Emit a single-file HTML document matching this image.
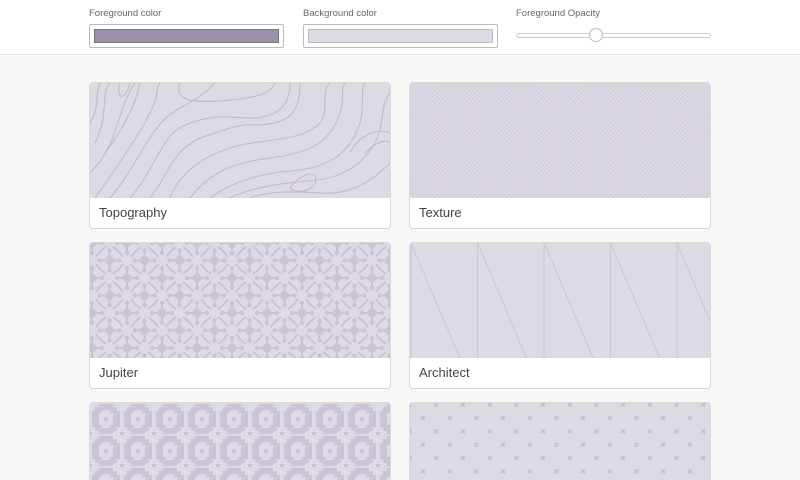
<!DOCTYPE html>
<html><head><style>
*{box-sizing:border-box;margin:0;padding:0}
html,body{width:800px;height:480px;overflow:hidden}
body{background:#f8f8f8;font-family:"Liberation Sans",sans-serif;position:relative}
.hdr{position:absolute;left:0;top:0;width:800px;height:55px;background:#fff;border-bottom:1px solid #e4e4e4}
.lbl{position:absolute;top:8px;font-size:9.5px;color:#666}
.sw{position:absolute;top:24px;width:195px;height:24px;border:1px solid #bbb;border-radius:2px;padding:4px}
.sw div{width:100%;height:100%;border:1px solid #999}
.track{position:absolute;left:516px;top:33px;width:195px;height:5px;border:1px solid #ccc;border-radius:3px;background:#fff}
.thumb{position:absolute;left:589px;top:28px;width:14px;height:14px;border:1px solid #bbb;border-radius:50%;background:#fff}
.card{position:absolute;width:302px;height:147px;background:#fff;border:1px solid #d8d8d8;border-radius:4px;overflow:hidden}
.img{position:absolute;left:0;top:0;width:300px;height:115px;background:#dddae3;overflow:hidden}
.t{position:absolute;left:9px;top:122px;font-size:13px;color:#444}
</style></head><body>
<div class="hdr">
<div class="lbl" style="left:89px">Foreground color</div>
<div class="lbl" style="left:303px">Background color</div>
<div class="lbl" style="left:516px">Foreground Opacity</div>
<div class="sw" style="left:89px"><div style="background:#9b91a9;border-color:#777"></div></div>
<div class="sw" style="left:303px"><div style="background:#dddae3;border-color:#bbb"></div></div>
<div class="track"></div><div class="thumb"></div>
</div>

<div class="card" style="left:89px;top:82px"><div class="img">
<svg width="300" height="115" fill="none" stroke="#bfb8c8" stroke-width="1">
<path d="M5 60 C20 30 10 10 20 0"/>
<path d="M0 90 C30 60 25 30 45 0"/>
<path d="M5 115 C30 80 50 50 60 30 C70 10 65 5 70 0"/>
<path d="M20 115 C50 80 60 40 90 25 C110 15 120 5 125 0"/>
<path d="M40 115 C70 80 70 50 100 40 C130 30 140 35 160 35 C190 35 200 20 200 0"/>
<path d="M60 115 C80 90 80 70 110 55 C140 45 150 40 170 42 C200 40 210 30 210 0"/>
<path d="M80 115 C90 90 110 75 140 65 C170 55 210 60 230 40 C240 25 230 10 240 0"/>
<path d="M100 115 C120 90 140 80 180 75 C220 70 240 60 250 30 C255 15 250 5 255 0"/>
<path d="M120 115 C140 100 170 90 200 88 C240 85 260 70 270 40 C275 20 270 5 275 0"/>
<path d="M140 115 C160 105 190 100 220 98 C250 95 270 85 285 60 C295 40 290 20 300 10"/>
<path d="M160 115 C180 108 200 108 230 110 C260 112 280 100 300 80"/>
<path d="M200 105 C210 90 230 85 225 100 C220 110 205 110 200 105"/>
<path d="M260 70 C270 50 290 45 300 50"/>
<path d="M275 70 C285 60 295 55 300 60"/>
<path d="M30 0 C25 15 35 20 40 0"/>
<path d="M90 0 C85 15 95 20 130 18 C170 15 180 10 185 0"/>
<path d="M0 40 C10 25 5 10 10 0"/>
<path d="M50 0 C45 25 30 50 15 70"/>
</svg></div><div class="t">Topography</div></div>

<div class="card" style="left:409px;top:82px"><div class="img" style="background-color:#dddae3;background-image:repeating-linear-gradient(45deg,rgba(200,193,210,.35) 0 1px,transparent 1px 3px),repeating-linear-gradient(-45deg,rgba(200,193,210,.35) 0 1px,transparent 1px 3px)"></div><div class="t">Texture</div></div>

<div class="card" style="left:89px;top:242px"><div class="img">
<svg width="300" height="115">
<defs>
<g id="cr" fill="#cac3d5" stroke="#cac3d5">
<circle r="4.5" stroke="none"/>
<line x1="0" y1="-9" x2="0" y2="9" stroke-width="2"/>
<line x1="-9" y1="0" x2="9" y2="0" stroke-width="2"/>
<circle cy="-10" r="2.2" stroke="none"/><circle cy="10" r="2.2" stroke="none"/>
<circle cx="-10" r="2.2" stroke="none"/><circle cx="10" r="2.2" stroke="none"/>
</g>
<pattern id="j" width="35" height="35" patternUnits="userSpaceOnUse" x="2" y="0">
<use href="#cr" x="17.5" y="17.5"/>
<use href="#cr" x="0" y="0"/><use href="#cr" x="35" y="0"/><use href="#cr" x="0" y="35"/><use href="#cr" x="35" y="35"/>
<g fill="none" stroke="#cac3d5" stroke-width="2">
<path d="M4 14 Q8 8 14 4 M21 4 Q27 8 31 14 M4 21 Q8 27 14 31 M21 31 Q27 27 31 21"/>
</g></pattern></defs>
<rect width="300" height="115" fill="url(#j)"/></svg></div><div class="t">Jupiter</div></div>

<div class="card" style="left:409px;top:242px"><div class="img">
<svg width="300" height="115" stroke="#cbc5d3" stroke-width="1" fill="none">
<path d="M1 0V115M67.5 0V115M134 0V115M200.5 0V115M267 0V115"/>
<path d="M1 0L50 115M67.5 0L116.5 115M134 0L183 115M200.5 0L249.5 115M267 0L316 115"/>
</svg></div><div class="t">Architect</div></div>

<div class="card" style="left:89px;top:402px"><div class="img">
<svg width="300" height="115">
<defs><pattern id="a" width="32" height="32" patternUnits="userSpaceOnUse" x="0" y="0">
<g fill="#cbc4d6">
<path d="M9 1h14v3h4v4h3v16h-3v4h-4v3h-14v-3h-4v-4h-3v-16h3v-4h4z M12 7v3h-3v12h3v3h8v-3h3v-12h-3v-3z"/>
<rect x="14" y="14" width="4" height="4"/>
<rect x="30" y="29" width="4" height="4"/><rect x="-2" y="29" width="4" height="4"/>
</g></pattern></defs>
<rect width="300" height="115" fill="url(#a)"/></svg></div></div>

<div class="card" style="left:409px;top:402px"><div class="img">
<svg width="300" height="115">
<defs><pattern id="x" width="26.7" height="26.7" patternUnits="userSpaceOnUse" x="1" y="2">
<g stroke="#c4bdcd" stroke-width="1.3">
<path d="M10 11l4 4M14 11l-4 4"/><path d="M23.3 -2.3l4 4M27.3 -2.3l-4 4"/><path d="M-3.4 -2.3l4 4M0.6 -2.3l-4 4"/><path d="M23.3 24.4l4 4M27.3 24.4l-4 4"/><path d="M-3.4 24.4l4 4M0.6 24.4l-4 4"/>
</g></pattern></defs>
<rect width="300" height="115" fill="url(#x)"/></svg></div></div>
</body></html>
